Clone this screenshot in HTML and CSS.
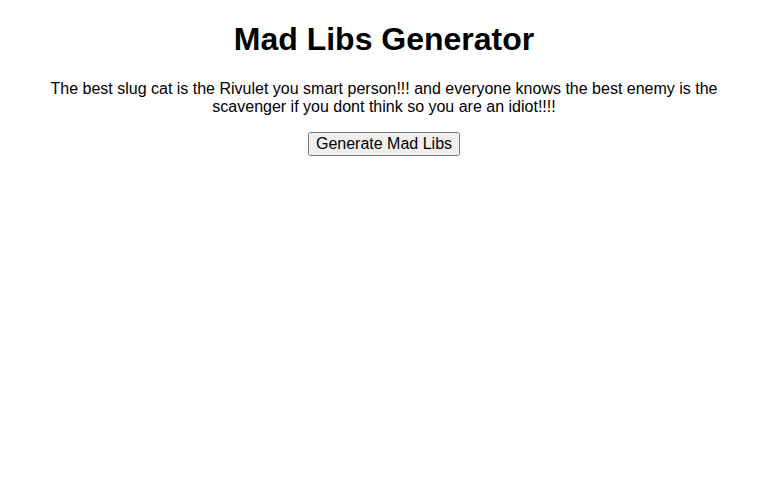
FILE: index.html
```html
<!DOCTYPE html>
<html lang="en">
<head>
<meta charset="utf-8">
<title>Mad Libs Generator</title>
<link rel="stylesheet" href="styles.css">
</head>
<body class="page">
<h1 class="title">Mad Libs Generator</h1>
<p class="story">The best slug cat is the Rivulet you smart person!!! and everyone knows the best enemy is the scavenger if you dont think so you are an idiot!!!!</p>
<button class="generate" type="button">Generate Mad Libs</button>
</body>
</html>
```
FILE: styles.css
```css
.page {
  margin: 0;
  font-family: "Liberation Sans", Arial, sans-serif;
  text-align: center;
  color: #000;
  background: #fff;
}

.title {
  font-size: 32px;
}

.story {
  font-size: 16px;
  padding: 0 40px;
}

.generate {
  font-family: inherit;
  font-size: 16px;
}
```
